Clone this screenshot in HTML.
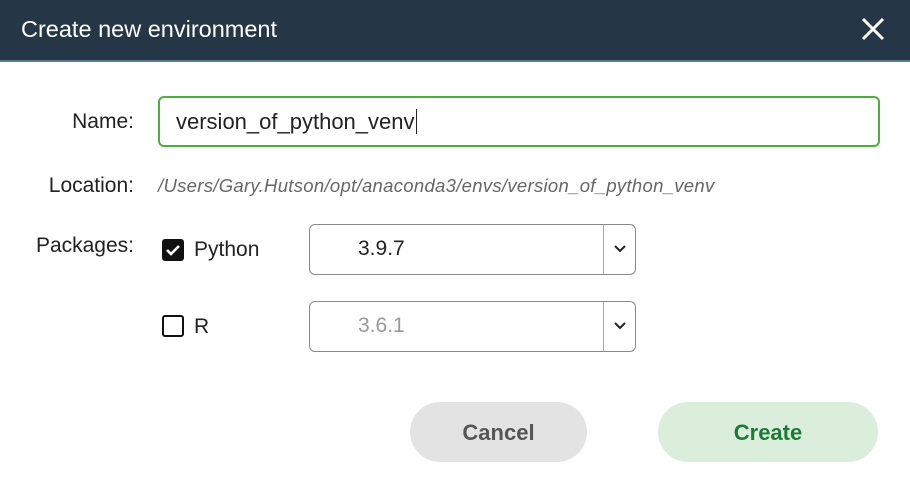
<!DOCTYPE html>
<html><head><style>
*{margin:0;padding:0;box-sizing:border-box}
body{width:910px;height:490px;background:#fff;font-family:"Liberation Sans",sans-serif;position:relative;overflow:hidden;color:#222}
.hd{position:absolute;left:0;top:0;width:910px;height:62px;background:#253647;border-bottom:2px solid #5b7b90}
.hd span{position:absolute;left:21px;top:16px;color:#fff;font-size:23.5px}
.x{position:absolute;left:860px;top:16px}
.lbl{position:absolute;font-size:21px;color:#222}
.r{right:776px;text-align:right}
.in{position:absolute;left:158px;top:96px;width:722px;height:51px;border:2px solid #4caf3c;border-radius:6px;font-size:22px;padding:11px 0 0 16px}
.sel{position:absolute;left:309px;width:327px;height:51px;border:1.5px solid #8a8a8a;border-radius:6px;font-size:21px;padding:12px 0 0 48px}
.sel:after{content:"";position:absolute;left:293px;top:0;width:1px;height:100%;background:#aaa}
.sel svg{position:absolute;left:303px;top:19px}
.cb{position:absolute;left:162px;width:22px;height:22px;border-radius:3px}
.btn{position:absolute;top:402px;height:60px;border-radius:30px;font-weight:bold;font-size:22px;text-align:center;line-height:62px}
</style></head><body>
<div class="hd"><span>Create new environment</span>
<svg class="x" width="26" height="26" viewBox="0 0 26 26"><path d="M3 3L23 23M23 3L3 23" stroke="#fff" stroke-width="3"/></svg></div>
<div class="lbl r" style="top:110px">Name:</div>
<div class="in">version_of_python_venv<span style="border-left:1.5px solid #222;margin-left:1px"></span></div>
<div class="lbl r" style="top:174px">Location:</div>
<div style="position:absolute;left:158px;top:175px;font-size:18.5px;font-style:italic;color:#666;letter-spacing:0.3px">/Users/Gary.Hutson/opt/anaconda3/envs/version_of_python_venv</div>
<div class="lbl r" style="top:234px">Packages:</div>
<div class="cb" style="top:239px;background:#111"><svg width="22" height="22" viewBox="0 0 22 22"><path d="M5 11l4 4 8-8" stroke="#fff" stroke-width="2.6" fill="none"/></svg></div>
<div class="lbl" style="left:194px;top:238px">Python</div>
<div class="sel" style="top:224px;color:#222">3.9.7<svg width="14" height="10" viewBox="0 0 14 10"><path d="M2 2l5 5 5-5" stroke="#222" stroke-width="2" fill="none"/></svg></div>
<div class="cb" style="top:315px;border:2px solid #111"></div>
<div class="lbl" style="left:194px;top:315px">R</div>
<div class="sel" style="top:301px;color:#999">3.6.1<svg width="14" height="10" viewBox="0 0 14 10"><path d="M2 2l5 5 5-5" stroke="#222" stroke-width="2" fill="none"/></svg></div>
<div class="btn" style="left:410px;width:177px;background:#e3e3e3;color:#555">Cancel</div>
<div class="btn" style="left:658px;width:220px;background:#dbeedb;color:#1f7a3a">Create</div>
</body></html>
